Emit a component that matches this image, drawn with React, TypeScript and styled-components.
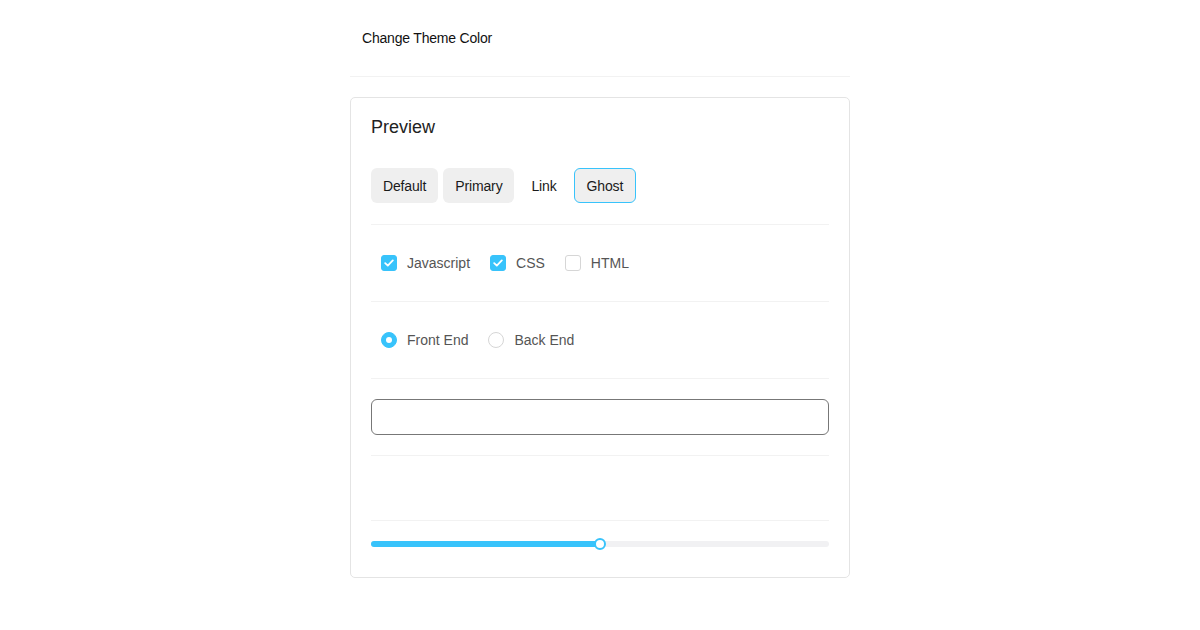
import styled, { createGlobalStyle } from "styled-components";

const accent = "#38c3fb";

const GlobalStyle = createGlobalStyle`
  html, body {
    margin: 0;
    padding: 0;
    background: #ffffff;
    font-family: "Liberation Sans", Arial, sans-serif;
  }
`;

const Page = styled.div`
  width: 500px;
  margin: 0 auto;
`;

const Header = styled.div`
  height: 77px;
  display: flex;
  align-items: center;
  padding: 0 12px;
  font-size: 14px;
  letter-spacing: -0.2px;
  color: #111;
  border-bottom: 1px solid #f2f2f2;
  box-sizing: border-box;
`;

const Card = styled.div`
  margin-top: 20px;
  border: 1px solid #e4e4e4;
  border-radius: 5px;
  padding: 19px 20px 20px;
`;

const Title = styled.div`
  font-size: 18px;
  line-height: 20px;
  color: #222;
  margin-bottom: 31px;
`;

const Section = styled.div<{ $top?: number; $bottom?: number; $last?: boolean }>`
  display: flex;
  align-items: center;
  padding: ${(p) => p.$top ?? 20}px 0 ${(p) => p.$bottom ?? 20}px;
  border-bottom: ${(p) => (p.$last ? "none" : "1px solid #f2f2f2")};
`;

const Button = styled.button<{ $variant?: "default" | "link" | "ghost" }>`
  height: 35px;
  padding: 0 12px;
  margin-right: 5px;
  font-family: inherit;
  font-size: 14px;
  letter-spacing: -0.15px;
  color: #1a1a1a;
  border-radius: 6px;
  cursor: pointer;
  background: ${(p) => (p.$variant === "link" ? "transparent" : "#efefef")};
  border: ${(p) => (p.$variant === "ghost" ? `1px solid ${accent}` : "none")};
`;

const Option = styled.label`
  display: flex;
  align-items: center;
  gap: 10px;
  padding: 0 10px;
  height: 36px;
  font-size: 14px;
  color: #555;
`;

const Box = styled.span<{ $checked?: boolean }>`
  width: 16px;
  height: 16px;
  box-sizing: border-box;
  border-radius: 3px;
  display: flex;
  align-items: center;
  justify-content: center;
  background: ${(p) => (p.$checked ? accent : "#fff")};
  border: 1px solid ${(p) => (p.$checked ? accent : "#d6d6d6")};
`;

const Radio = styled.span<{ $checked?: boolean }>`
  width: 16px;
  height: 16px;
  box-sizing: border-box;
  border-radius: 50%;
  display: flex;
  align-items: center;
  justify-content: center;
  background: ${(p) => (p.$checked ? accent : "#fff")};
  border: 1px solid ${(p) => (p.$checked ? accent : "#d6d6d6")};
  &::after {
    content: "";
    display: ${(p) => (p.$checked ? "block" : "none")};
    width: 6px;
    height: 6px;
    border-radius: 50%;
    background: #fff;
  }
`;

const TextInput = styled.input`
  width: 100%;
  height: 36px;
  box-sizing: border-box;
  border: 1px solid #777;
  border-radius: 6px;
  outline: none;
  padding: 0 10px;
  font-family: inherit;
  font-size: 14px;
`;

const Spacer = styled.div`
  height: 24px;
`;

const Track = styled.div`
  position: relative;
  width: 100%;
  height: 6px;
  border-radius: 3px;
  background: #f1f1f3;
`;

const Fill = styled.div`
  height: 100%;
  border-radius: 3px;
  background: ${accent};
`;

const Thumb = styled.div`
  position: absolute;
  top: 50%;
  width: 12px;
  height: 12px;
  box-sizing: border-box;
  border: 2px solid ${accent};
  background: #fff;
  border-radius: 50%;
  transform: translate(-50%, -50%);
`;

const Check = () => (
  <svg width="10" height="8" viewBox="0 0 10 8" fill="none">
    <path d="M1.2 4.2 L3.8 6.6 L8.8 1.4" stroke="#fff" strokeWidth="1.8" strokeLinecap="round" strokeLinejoin="round" />
  </svg>
);

export default function App() {
  const value = 50;
  return (
    <>
      <GlobalStyle />
      <Page>
        <Header>Change Theme Color</Header>
        <Card>
          <Title>Preview</Title>
          <Section $top={0} $bottom={21}>
            <Button>Default</Button>
            <Button>Primary</Button>
            <Button $variant="link">Link</Button>
            <Button $variant="ghost">Ghost</Button>
          </Section>
          <Section>
            <Option>
              <Box $checked>
                <Check />
              </Box>
              Javascript
            </Option>
            <Option>
              <Box $checked>
                <Check />
              </Box>
              CSS
            </Option>
            <Option>
              <Box />
              HTML
            </Option>
          </Section>
          <Section>
            <Option>
              <Radio $checked />
              Front End
            </Option>
            <Option>
              <Radio />
              Back End
            </Option>
          </Section>
          <Section>
            <TextInput />
          </Section>
          <Section $bottom={20}>
            <Spacer />
          </Section>
          <Section $top={20} $bottom={10} $last>
            <Track>
              <Fill style={{ width: `${value}%` }} />
              <Thumb style={{ left: `${value}%` }} />
            </Track>
          </Section>
        </Card>
      </Page>
    </>
  );
}
